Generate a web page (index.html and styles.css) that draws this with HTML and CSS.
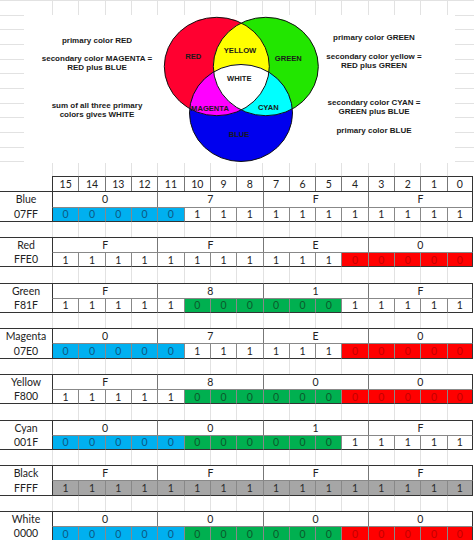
FILE: index.html
```html
<!DOCTYPE html>
<html lang="en">
<head>
    <meta charset="UTF-8">
    <meta name="viewport" content="width=device-width, initial-scale=1.0">
    <title>RGB565 colours</title>
    <link rel="stylesheet" href="styles.css">
</head>
<body>
    <div class="sheet">
        <div class="sheet-top">
            <div class="picture">
                <div class="notes notes-left">
                    <p>primary color RED</p>
                    <p class="l2">secondary color MAGENTA =<br>RED plus BLUE</p>
                    <p class="l3">sum of all three primary<br>colors gives WHITE</p>
                </div>
                <svg class="venn" width="160" height="148" viewBox="0 0 160 148">
                    <defs>
                        <clipPath id="clip-red"><ellipse cx="54.8" cy="51.5" rx="52.5" ry="49.2"/></clipPath>
                        <clipPath id="clip-green"><ellipse cx="103.8" cy="51.5" rx="52.5" ry="49.2"/></clipPath>
                    </defs>
                    <ellipse cx="54.8" cy="51.5" rx="52.5" ry="49.2" fill="#ff0030"/>
                    <ellipse cx="103.8" cy="51.5" rx="52.5" ry="49.2" fill="#22e600"/>
                    <ellipse cx="79" cy="98" rx="51.5" ry="48.5" fill="#0000ee"/>
                    <!-- overlaps -->
                    <g clip-path="url(#clip-red)">
                        <ellipse cx="103.8" cy="51.5" rx="52.5" ry="49.2" fill="#ffff00"/>
                        <ellipse cx="79" cy="98" rx="51.5" ry="48.5" fill="#ff00ff"/>
                    </g>
                    <g clip-path="url(#clip-green)">
                        <ellipse cx="79" cy="98" rx="51.5" ry="48.5" fill="#00ffff"/>
                    </g>
                    <g clip-path="url(#clip-red)">
                        <g clip-path="url(#clip-green)">
                            <ellipse cx="79" cy="98" rx="51.5" ry="48.5" fill="#ffffff"/>
                        </g>
                    </g>
                    <g fill="none" stroke="#111" stroke-width="1">
                        <ellipse cx="54.8" cy="51.5" rx="52.5" ry="49.2"/>
                        <ellipse cx="103.8" cy="51.5" rx="52.5" ry="49.2"/>
                        <ellipse cx="79" cy="98" rx="51.5" ry="48.5"/>
                    </g>
                    <g class="venn-labels">
                        <text x="31.3" y="41.3">RED</text>
                        <text x="78" y="35.7">YELLOW</text>
                        <text x="126.3" y="43">GREEN</text>
                        <text x="77.3" y="63.7">WHITE</text>
                        <text x="48" y="93">MAGENTA</text>
                        <text x="106.3" y="92">CYAN</text>
                        <text x="77" y="119.7">BLUE</text>
                    </g>
                </svg>
                <div class="notes notes-right">
                    <p>primary color GREEN</p>
                    <p class="r2">secondary color yellow =<br>RED plus GREEN</p>
                    <p class="r3">secondary color CYAN =<br>GREEN plus BLUE</p>
                    <p class="r4">primary color BLUE</p>
                </div>
            </div>
        </div>
        <div id="table"></div>
    </div>

    <script>
        const colours = [
            ['Blue', '07FF'], ['Red', 'FFE0'], ['Green', 'F81F'], ['Magenta', '07E0'],
            ['Yellow', 'F800'], ['Cyan', '001F'], ['Black', 'FFFF'], ['White', '0000']
        ];
        // 5-6-5 fields, filled when the field is all zeros
        const fields = [
            { from: 15, to: 11, fill: 'fill-blue' },
            { from: 10, to: 5, fill: 'fill-green' },
            { from: 4, to: 0, fill: 'fill-red' }
        ];
        const table = document.getElementById('table');

        function cell(cls, text) {
            const div = document.createElement('div');
            div.className = cls;
            if (text !== undefined) div.textContent = text;
            return div;
        }

        const header = cell('row header');
        header.appendChild(cell('corner'));
        for (let bit = 15; bit >= 0; bit--) header.appendChild(cell('hcell', bit));
        table.appendChild(header);

        colours.forEach(([name, hex]) => {
            const value = parseInt(hex, 16);
            const block = cell('row block');

            const label = cell('label');
            label.appendChild(cell('label-line', name));
            label.appendChild(cell('label-line', hex));
            block.appendChild(label);

            for (const digit of hex) block.appendChild(cell('hex', digit));

            for (let bit = 15; bit >= 0; bit--) {
                const b = cell('bit', (value >> bit) & 1);
                if (name === 'Black') {
                    b.classList.add('fill-gray');
                } else {
                    const f = fields.find(f => bit <= f.from && bit >= f.to);
                    const mask = (1 << (f.from - f.to + 1)) - 1;
                    if (((value >> f.to) & mask) === 0) b.classList.add(f.fill);
                }
                block.appendChild(b);
            }
            table.appendChild(block);

            const gap = cell('row gap');
            for (let i = 0; i < 17; i++) gap.appendChild(cell('gcell'));
            table.appendChild(gap);
        });
    </script>
</body>
</html>
```

FILE: styles.css
```css
html, body {
    margin: 0;
    overflow: hidden;
}

body {
    font-family: Lato, "Liberation Sans", sans-serif;
    color: #222;
    background: #fff;
}

.sheet {
    width: 474px;
    height: 540px;
    overflow: hidden;
}

/* spreadsheet grid behind the pasted picture */
.sheet-top {
    height: 176px;
    display: flow-root;
    background-image:
        repeating-linear-gradient(to bottom, #e2e2e2 0 1px, transparent 1px 14.667px),
        repeating-linear-gradient(to right, #e2e2e2 0 1px, transparent 1px 26.3125px);
    background-size: 100% 100%, 421px 100%;
    background-position: 0 0, 51.5px 0;
    background-repeat: no-repeat;
}

.picture {
    margin: 15px 0 0 24px;
    width: 431px;
    height: 148px;
    background: #fff;
    display: flex;
}

.notes {
    font-family: "Liberation Sans", Arial, sans-serif;
    font-weight: bold;
    font-size: 8px;
    line-height: 9px;
    text-align: center;
    color: #1a1a1a;
    box-sizing: border-box;
}

.notes p {
    margin: 0;
}

.notes-left {
    width: 138px;
    padding: 20.5px 0 0 8px;
}

.notes-left .l2 { margin-top: 9px; }
.notes-left .l3 { margin-top: 29px; }

.notes-right {
    width: 104px;
    padding-top: 17.5px;
}

.notes-right .r2 { margin-top: 10px; }
.notes-right .r3 { margin-top: 28px; }
.notes-right .r4 { margin-top: 10px; }

.venn {
    flex: none;
    display: block;
}

.venn-labels text {
    font-family: "Liberation Sans", Arial, sans-serif;
    font-weight: bold;
    font-size: 7.6px;
    fill: #1a1a1a;
    text-anchor: middle;
    dominant-baseline: central;
}

/* bit table */
.row {
    display: grid;
    grid-template-columns: 52px repeat(16, 1fr);
    width: 473px;
    font-size: 10.5px;
}

.row > div {
    box-sizing: border-box;
    display: flex;
    align-items: center;
    justify-content: center;
}

.header {
    height: 15.3px;
}

.hcell {
    border-top: 1px solid #333;
    border-left: 1px solid #777;
}

.hcell:nth-child(2) { border-left-color: #333; }
.hcell:last-child { border-right: 1px solid #333; }

.block {
    grid-template-rows: 15.22px 15.22px;
}

.block > .label {
    grid-column: 1;
    grid-row: 1 / span 2;
    display: grid;
    grid-template-rows: 1fr 1fr;
    border-top: 1px solid #333;
    border-bottom: 1px solid #333;
}

.label-line {
    display: flex;
    align-items: center;
    justify-content: center;
}

.hex {
    grid-row: 1;
    grid-column: span 4;
    border-top: 1px solid #333;
    border-left: 1px solid #777;
}

.hex:nth-child(2) { border-left-color: #333; }
.hex:nth-child(5) { border-right: 1px solid #333; }

.bit {
    grid-row: 2;
    border-top: 1px solid #888;
    border-bottom: 1px solid #333;
    border-left: 1px solid #888;
}

.bit:nth-child(6) { border-left-color: #333; }
.bit:last-child { border-right: 1px solid #333; }

.fill-blue { background: #00b0f0; color: #0d5a85; }
.fill-green { background: #00b050; color: #0c5a2c; }
.fill-red { background: #ff0000; color: #c40000; }
.fill-gray { background: #a6a6a6; color: #2a2a2a; }

.gap {
    height: 15.22px;
}

.gcell + .gcell {
    border-left: 1px solid #e2e2e2;
}
```
